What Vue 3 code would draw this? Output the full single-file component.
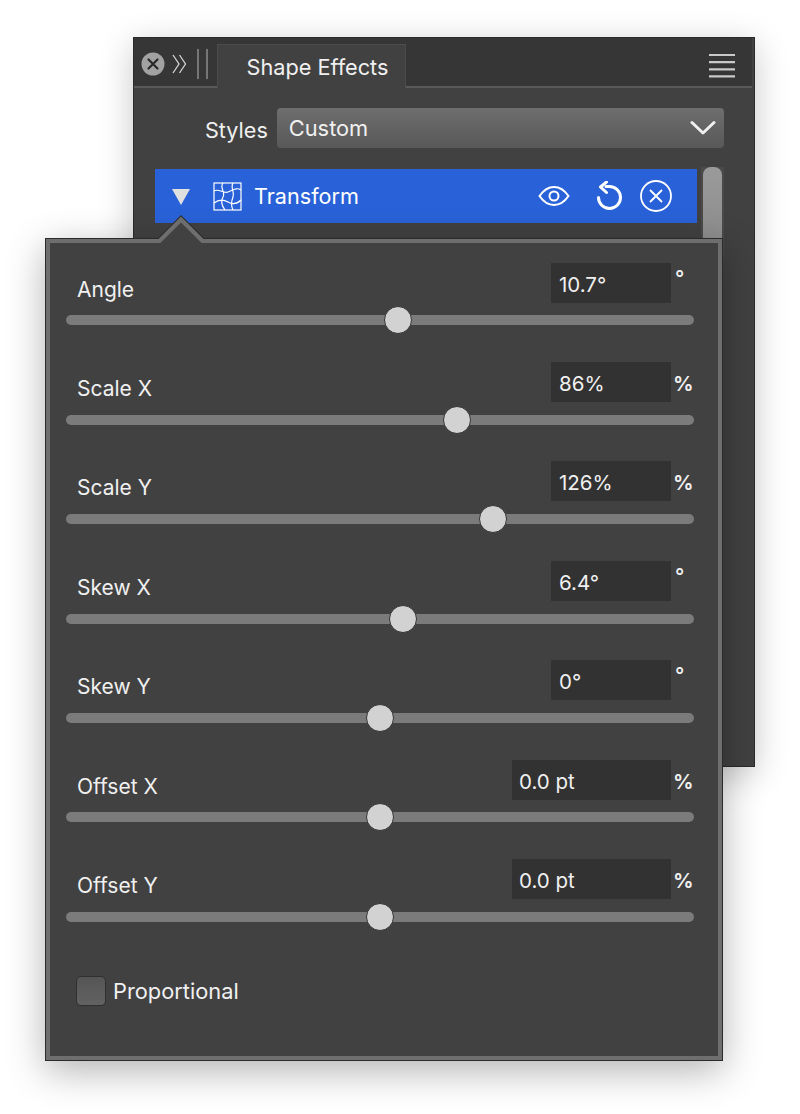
<script setup>
const rows = [
  { label: 'Angle', value: '10.7°', unit: '°', pos: 52.9 },
  { label: 'Scale X', value: '86%', unit: '%', pos: 62.3 },
  { label: 'Scale Y', value: '126%', unit: '%', pos: 68 },
  { label: 'Skew X', value: '6.4°', unit: '°', pos: 53.7 },
  { label: 'Skew Y', value: '0°', unit: '°', pos: 50 },
  { label: 'Offset X', value: '0.0 pt', unit: '%', pos: 50, wide: true },
  { label: 'Offset Y', value: '0.0 pt', unit: '%', pos: 50, wide: true }
]
</script>

<template>
  <div class="page">
    <section class="panel">
      <header class="titlebar">
        <div class="tools">
          <svg class="close" width="24" height="24" viewBox="0 0 24 24">
            <circle cx="12" cy="12" r="11.5" fill="#a2a2a2" />
            <path d="M7.500 7.500l9 9M16.500 7.500l-9 9" stroke="#2a2a2a" stroke-width="2.200" stroke-linecap="round" fill="none" />
          </svg>
          <svg class="chev" width="15" height="20" viewBox="0 0 15 20">
            <path d="M1 1l6 9-6 9M7.500 1l6 9-6 9" stroke="#d4d4d4" stroke-width="1.300" fill="none" />
          </svg>
          <div class="grip"></div>
        </div>
        <div class="tab">Shape Effects</div>
        <svg class="menu" width="26" height="26" viewBox="0 0 26 26">
          <path d="M0 3h26M0 10.200h26M0 17.300h26M0 24.300h26" stroke="#c9c9c9" stroke-width="2.200" fill="none" />
        </svg>
      </header>
      <div class="styles">
        <span class="styles-label">Styles</span>
        <div class="dropdown">
          <span>Custom</span>
          <svg width="26" height="16" viewBox="0 0 26 16">
            <path d="M2 2.500l11 10.500L24 2.500" stroke="#f0f0f0" stroke-width="3" fill="none" stroke-linecap="round" stroke-linejoin="round" />
          </svg>
        </div>
      </div>
      <div class="list">
        <div class="effect">
          <svg class="tri" width="18" height="16" viewBox="0 0 18 16"><path d="M0 0h18L9 16z" fill="#e0e0e0" /></svg>
          <svg class="warp" width="29" height="29" viewBox="0 0 29 29">
            <rect x="1" y="1" width="27" height="27" fill="none" stroke="#fff" stroke-width="1.200" />
            <path d="M1 9C6 6 10 12 15 10S24 5 28 8M1 21C6 17 10 17 15 20S24 22 28 18M10 1C6 6 13 10 10 15S9 24 12 28M20 1C17 6 22 10 20 15S18 24 20 28" fill="none" stroke="#fff" stroke-width="1.200" />
          </svg>
          <span class="effect-name">Transform</span>
          <svg class="eye" width="32" height="22" viewBox="0 0 32 22">
            <path d="M1.500 11C6 4.500 11 2 16 2s10 2.500 14.500 9C26 17.500 21 20 16 20S6 17.500 1.500 11z" fill="none" stroke="#fff" stroke-width="2" />
            <circle cx="16" cy="11" r="4.500" fill="none" stroke="#fff" stroke-width="2" />
          </svg>
          <svg class="reset" width="26" height="30" viewBox="0 0 26 30">
            <path d="M9 5.500H12.500A11 11 0 1 1 1.500 16.500" fill="none" stroke="#fff" stroke-width="3" stroke-linecap="round" />
            <path d="M9.500 1L3.500 6l6 5.500" fill="none" stroke="#fff" stroke-width="3" stroke-linecap="round" stroke-linejoin="round" />
          </svg>
          <svg class="remove" width="32" height="32" viewBox="0 0 32 32">
            <circle cx="16" cy="16" r="15" fill="none" stroke="#fff" stroke-width="1.800" />
            <path d="M10 10l12 12M22 10L10 22" stroke="#fff" stroke-width="1.800" fill="none" />
          </svg>
        </div>
        <div class="scrolltrack"><div class="scrollthumb"></div></div>
      </div>
    </section>

    <section class="popover">
      <svg class="notch" width="62" height="32" viewBox="0 0 62 32">
        <path d="M31 1L7 25h48z" fill="#2b2b2b" />
        <path d="M31 2.400L4.400 29h53.200z" fill="#6e6e6e" />
        <path d="M31 8.400L9.400 30h43.200z" fill="#414141" />
      </svg>
      <div class="inner">
        <div v-for="row in rows" :key="row.label" class="row">
          <div class="row-head">
            <span class="row-label">{{ row.label }}</span>
            <div class="value" :class="{ wide: row.wide }">{{ row.value }}</div>
            <span class="unit" :class="{ deg: row.unit === '°' }">{{ row.unit }}</span>
          </div>
          <div class="slider">
            <div class="thumb" :style="{ left: row.pos + '%' }"></div>
          </div>
        </div>
        <label class="check">
          <span class="box"></span>
          <span>Proportional</span>
        </label>
      </div>
    </section>
  </div>
</template>

<style>
html, body { margin: 0; background: #fff; }
</style>

<style scoped>
.page {
  position: relative;
  width: 800px;
  height: 1114px;
  overflow: hidden;
  background: #fff;
  font-family: Inter, "Liberation Sans", sans-serif;
  color: #f0f0f0;
  font-size: 21px;
  padding-top: 37px;
  box-sizing: border-box;
}
.panel {
  margin-left: 133px;
  width: 622px;
  height: 730px;
  box-sizing: border-box;
  background: #414141;
  border: 1px solid #2b2b2b;
  box-shadow: 0 8px 32px rgba(0, 0, 0, 0.22);
}
.titlebar {
  display: flex;
  height: 50px;
  box-sizing: border-box;
  background: #363636;
  border-bottom: 2px solid #5a5a5a;
  margin-right: 2px;
  padding-left: 7px;
  align-items: flex-end;
}
.tools {
  display: flex;
  align-items: center;
  height: 48px;
  padding-top: 4px;
  box-sizing: border-box;
  width: 76px;
  flex: none;
}
.close { flex: none; }
.chev { margin-left: 7px; flex: none; }
.grip {
  margin-left: 10px;
  width: 11px;
  height: 30px;
  box-sizing: border-box;
  border-left: 2px solid #767676;
  border-right: 2px solid #767676;
}
.tab {
  width: 189px;
  height: 44px;
  margin-bottom: -2px;
  box-sizing: border-box;
  background: #414141;
  border: 1px solid #4c4c4c;
  border-bottom: none;
  display: flex;
  align-items: center;
  justify-content: center;
  font-size: 21.7px;
  padding-left: 12px;
}
.menu { margin-left: auto; margin-right: 17px; margin-bottom: 8px; }
.styles {
  display: flex;
  align-items: center;
  padding: 20px 30px 0 71px;
}
.styles-label { font-size: 21.6px; margin-right: 9px; padding-top: 3px; }
.dropdown {
  flex: 1;
  height: 40px;
  border-radius: 4px;
  background: linear-gradient(#6e6e6e, #585858);
  display: flex;
  align-items: center;
  justify-content: space-between;
  padding: 0 8px 0 12px;
  box-sizing: border-box;
  font-size: 21.8px;
}
.list {
  display: flex;
  margin: 21px 30px 0 21px;
  height: 90px;
}
.effect {
  width: 542px;
  height: 54px;
  background: #2962d8;
  display: flex;
  align-items: center;
  position: relative;
  color: #fff;
  font-size: 21.6px;
}
.tri { margin-left: 17px; margin-top: 2px; flex: none; }
.warp { margin-left: 23px; flex: none; }
.effect-name { margin-left: 12px; }
.eye { margin-left: auto; }
.reset { margin-left: 27px; }
.remove { margin-left: 17px; margin-right: 25px; }
.scrolltrack {
  margin-left: 4px;
  flex: 1;
  background: #4a4a4a;
  padding: 0 2px;
  height: 90px;
  margin-top: -2px;
}
.scrollthumb {
  height: 100%;
  background: linear-gradient(#9a9a9a, #8a8a8a);
  border-radius: 8px 8px 0 0;
}
.popover {
  position: absolute;
  left: 45px;
  top: 238px;
  width: 678px;
  height: 823px;
  box-sizing: border-box;
  border: 1px solid #2b2b2b;
  background: #6e6e6e;
  box-shadow: 0 10px 36px rgba(0, 0, 0, 0.3);
}
.notch {
  position: absolute;
  left: 104px;
  top: -25px;
}
.inner {
  position: absolute;
  inset: 4px;
  box-sizing: border-box;
  background: #414141;
  padding: 19.6px 24px 0 16px;
}
.row { height: 99.4px; }
.row-head {
  display: flex;
  height: 40px;
  align-items: flex-start;
}
.row-label {
  margin-left: 11px;
  margin-top: 12px;
  line-height: 30px;
  flex: 1;
}
.value {
  width: 120px;
  height: 40px;
  box-sizing: border-box;
  background: #323232;
  line-height: 43px;
  padding-left: 8px;
  font-size: 20.5px;
}
.value.wide { width: 159px; padding-left: 7px; }
.unit {
  width: 23px;
  padding-left: 2px;
  box-sizing: border-box;
  line-height: 43px;
  font-weight: 600;
  font-size: 20.5px;
}
.unit.deg { line-height: 30px; padding-left: 4px; font-weight: 500; }
.slider {
  position: relative;
  height: 10px;
  margin-top: 12.85px;
  border-radius: 5px;
  background: #7b7b7b;
}
.thumb {
  position: absolute;
  top: 50%;
  width: 28px;
  height: 28px;
  box-sizing: border-box;
  border-radius: 50%;
  background: #d2d2d2;
  border: 1px solid #333;
  transform: translate(-50%, -50%);
}
.check {
  display: flex;
  align-items: center;
  margin: 18px 0 0 10px;
  font-size: 21.8px;
}
.box {
  width: 30px;
  height: 30px;
  box-sizing: border-box;
  border-radius: 5px;
  border: 1px solid #303030;
  background: linear-gradient(#555, #626262);
  margin-right: 7px;
}
</style>
